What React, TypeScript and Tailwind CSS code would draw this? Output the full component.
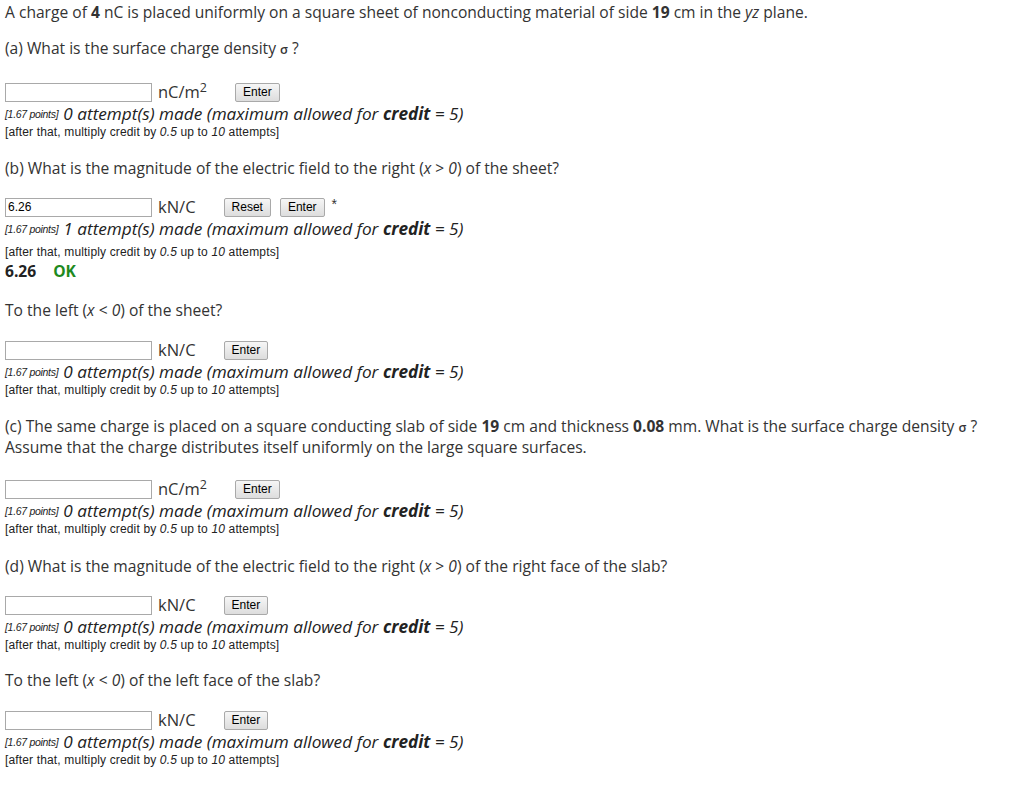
import React from "react";

const MAIN = "font-['Open_Sans','Noto_Sans',sans-serif]";
const SMALL = "font-['Liberation_Sans',Arial,sans-serif]";

function Btn({ label }: { label: string }) {
  return (
    <button
      className={`${SMALL} h-[19px] px-[7px] text-[12px] leading-none text-black border border-[#a9a9a9] rounded-[2px] bg-gradient-to-b from-[#f6f6f6] to-[#dddddd]`}
    >
      {label}
    </button>
  );
}

function Unit({ u }: { u: string }) {
  if (u === "nC/m2") {
    return (
      <span className={`${MAIN} text-[16.5px] leading-none text-[#333]`}>
        nC/m<span className="text-[12.5px] relative -top-[6px]">2</span>
      </span>
    );
  }
  return <span className={`${MAIN} text-[16.5px] leading-none text-[#333]`}>{u}</span>;
}

function Answer({
  unit,
  value,
  attempts = 0,
  reset = false,
}: {
  unit: string;
  value?: string;
  attempts?: number;
  reset?: boolean;
}) {
  return (
    <div>
      <div className="flex items-center h-[20px]">
        <input
          type="text"
          defaultValue={value}
          className={`${SMALL} w-[147px] h-[19px] border border-[#a9a9a9] px-[2px] text-[12px] text-black outline-none`}
        />
        <span className="ml-[6px] mr-[28px]">
          <Unit u={unit} />
        </span>
        <div className="flex items-center gap-[9px]">
          {reset && <Btn label="Reset" />}
          <Btn label="Enter" />
          {reset && <span className={`${SMALL} text-[14px] text-[#333] -mt-[6px] -ml-[2px]`}>*</span>}
        </div>
      </div>
      <div className="h-[24px] flex items-center italic text-[#222]">
        <span className={`${SMALL} text-[10.5px] tracking-[-0.3px] mt-[2px]`}>[1.67 points]</span>
        <span className={`${MAIN} text-[17.2px] ml-[5px] leading-none`}>
          {attempts} attempt(s) made (maximum allowed for <b>credit</b> = 5)
        </span>
      </div>
      <div
        className={`${SMALL} text-[12px] tracking-[0.15px] h-[12px] text-[#222] ${
          attempts ? "mt-[5px]" : "mt-0"
        } leading-[12px]`}
      >
        [after that, multiply credit by <i>0.5</i> up to <i>10</i> attempts]
      </div>
    </div>
  );
}

function Q({ children, className = "" }: { children: React.ReactNode; className?: string }) {
  return <p className={`${MAIN} text-[15.6px] leading-[21px] text-[#333] ${className}`}>{children}</p>;
}

const Sigma = () => <span className="text-[12.5px] leading-none font-semibold">σ</span>;

export default function App() {
  return (
    <div className="bg-white w-[1024px] h-[786px] pl-[5px] pt-[2px] overflow-hidden">
      <Q>
        A charge of <b>4</b> nC is placed uniformly on a square sheet of nonconducting material of side <b>19</b> cm in
        the <i>yz</i> plane.
      </Q>
      <Q className="mt-[15px]">
        (a) What is the surface charge density <Sigma /> ?
      </Q>
      <div className="mt-[23px]">
        <Answer unit="nC/m2" />
      </div>
      <Q className="mt-[20px]">
        (b) What is the magnitude of the electric field to the right (<i>x</i> &gt; <i>0</i>) of the sheet?
      </Q>
      <div className="mt-[18px]">
        <Answer unit="kN/C" value="6.26" attempts={1} reset />
      </div>
      <p className={`${MAIN} text-[15.6px] font-bold leading-[20px] text-[#222] mt-[3px]`}>
        6.26<span className="ml-[17px] text-[#1e8a1e]">OK</span>
      </p>
      <Q className="mt-[19px]">
        To the left (<i>x</i> &lt; <i>0</i>) of the sheet?
      </Q>
      <div className="mt-[19px]">
        <Answer unit="kN/C" />
      </div>
      <Q className="mt-[20px]">
        (c) The same charge is placed on a square conducting slab of side <b>19</b> cm and thickness <b>0.08</b> mm. What
        is the surface charge density <Sigma /> ?<br />
        Assume that the charge distributes itself uniformly on the large square surfaces.
      </Q>
      <div className="mt-[21px]">
        <Answer unit="nC/m2" />
      </div>
      <Q className="mt-[21px]">
        (d) What is the magnitude of the electric field to the right (<i>x</i> &gt; <i>0</i>) of the right face of the
        slab?
      </Q>
      <div className="mt-[18px]">
        <Answer unit="kN/C" />
      </div>
      <Q className="mt-[19px]">
        To the left (<i>x</i> &lt; <i>0</i>) of the left face of the slab?
      </Q>
      <div className="mt-[19px]">
        <Answer unit="kN/C" />
      </div>
    </div>
  );
}
